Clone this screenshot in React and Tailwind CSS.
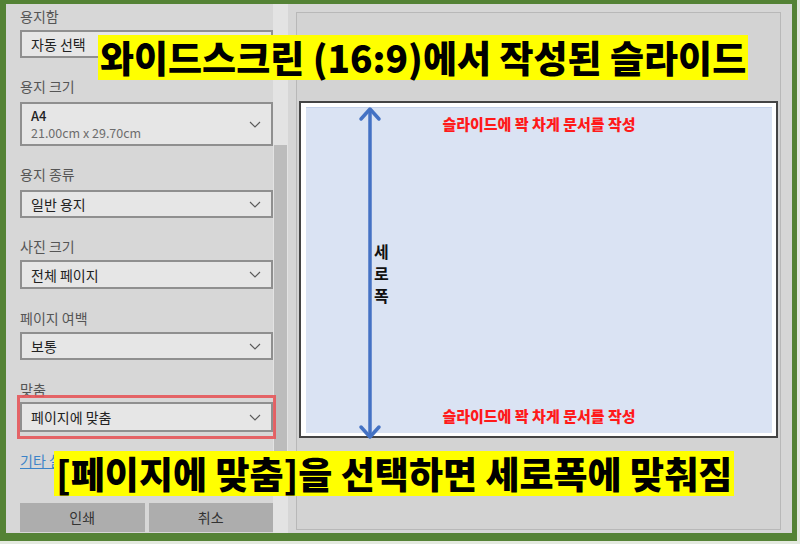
import React from "react";

const FONT = { fontFamily: '"Noto Sans CJK KR", "Noto Sans", sans-serif' };

function Chevron() {
  return (
    <svg width="12" height="7" viewBox="0 0 12 7" className="shrink-0">
      <path d="M1 1 L6 6 L11 1" fill="none" stroke="#5a5a5a" strokeWidth="1.1" />
    </svg>
  );
}

function Label({ children, className = "" }) {
  return (
    <div className={"h-[18px] text-[14px] leading-[18px] text-[#555555] " + className}>
      {children}
    </div>
  );
}

function Dropdown({ children, className = "", chevron = true }) {
  return (
    <div
      className={
        "flex items-center justify-between border-2 border-[#8f8f8f] bg-[#e6e6e6] pl-[9px] pr-[10px] " +
        className
      }
    >
      <div className="text-[14px] leading-[18px] text-[#222222]">{children}</div>
      {chevron && <Chevron />}
    </div>
  );
}

export default function App() {
  return (
    <div className="relative h-[544px] w-[800px] overflow-hidden bg-[#e4e9e0]" style={FONT}>
      <div className="flex h-[541px] w-[797px] border-b-[8px] border-l-[6px] border-r-[5px] border-t-4 border-[#548235]">
        {/* Left settings panel */}
        <div className="flex h-full w-[282px] shrink-0 bg-[#d7d7d7]">
          <div className="flex w-[267px] flex-col pl-[14px]">
            <Label className="mt-[3px]">용지함</Label>
            <Dropdown className="mt-[5px] h-[28px]" chevron={false}>자동 선택</Dropdown>

            <Label className="mt-[19px]">용지 크기</Label>
            <div className="mt-[7px] flex h-[44px] items-center justify-between border-2 border-[#8f8f8f] bg-[#e6e6e6] pl-[9px] pr-[10px]">
              <div className="flex flex-col">
                <span className="text-[13px] font-medium leading-[16px] text-[#222222]">A4</span>
                <span className="text-[12.5px] leading-[17px] text-[#6d6d6d]">21.00cm x 29.70cm</span>
              </div>
              <Chevron />
            </div>

            <Label className="mt-[19px]">용지 종류</Label>
            <Dropdown className="mt-[7px] h-[28px]">일반 용지</Dropdown>

            <Label className="mt-[19px]">사진 크기</Label>
            <Dropdown className="mt-[5px] h-[29px]">전체 페이지</Dropdown>

            <Label className="mt-[20px]">페이지 여백</Label>
            <Dropdown className="mt-[5px] h-[28px]">보통</Dropdown>

            <Label className="mt-[20px]">맞춤</Label>
            <div className="relative mt-[4px]">
              <Dropdown className="h-[30px]">페이지에 맞춤</Dropdown>
              <div className="pointer-events-none absolute -bottom-[7px] -left-[3px] -right-[3px] -top-[7px] border-[3px] border-[#e5575a]/90" />
            </div>

            <div className="mt-[18px] h-[20px] text-[14px] leading-[20px] text-[#3b83c8] underline underline-offset-2">
              기타 설정
            </div>

            <div className="mt-[33px] flex h-[29px] gap-[4px]">
              <div className="flex flex-1 items-center justify-center bg-[#adadad] text-[14px] text-[#333333]">인쇄</div>
              <div className="flex flex-1 items-center justify-center bg-[#adadad] text-[14px] text-[#333333]">취소</div>
            </div>
          </div>
          {/* scrollbar */}
          <div className="flex w-[15px] flex-col bg-[#e3e3e3]">
            <div className="h-[141px]" />
            <div className="mx-[1px] h-[325px] bg-[#bcbcbc]" />
          </div>
        </div>

        {/* Right preview area */}
        <div className="flex flex-1 bg-[#d6d6d6] pb-[3px] pl-[8px] pr-[11px] pt-[8px]">
          <div className="flex flex-1 flex-col border border-[#b8b8b8] bg-[#d3d3d3] px-[2px] pt-[88px]">
            <div className="relative h-[337px] w-[479px] border-2 border-[#444444] bg-white pb-[3px] pl-[5px] pr-[4px] pt-[4px]">
              <div className="flex h-full flex-col items-center justify-between border-t border-[#c3d1ea] bg-[#dae3f3] pb-[8px] pt-[6px]">
                <div className="text-[15px] font-black leading-[19px] text-[#ff1a1a]">슬라이드에 꽉 차게 문서를 작성</div>
                <div className="text-[15px] font-black leading-[19px] text-[#ff1a1a]">슬라이드에 꽉 차게 문서를 작성</div>
              </div>
              {/* arrow annotation */}
              <svg
                className="absolute left-[58px] top-[3px] overflow-visible"
                width="22"
                height="334"
                viewBox="0 0 22 334"
              >
                <line x1="11" y1="4" x2="11" y2="330" stroke="#4472c4" strokeWidth="3.5" />
                <path d="M2 13 L11 3 L20 13" fill="none" stroke="#4472c4" strokeWidth="3.5" strokeLinecap="round" strokeLinejoin="round" />
                <path d="M2 321 L11 331 L20 321" fill="none" stroke="#4472c4" strokeWidth="3.5" strokeLinecap="round" strokeLinejoin="round" />
              </svg>
              <div className="absolute left-[73px] top-[137px] flex flex-col text-[16px] font-bold leading-[22px] text-[#111111]">
                <span>세</span>
                <span>로</span>
                <span>폭</span>
              </div>
            </div>
          </div>
        </div>
      </div>

      {/* Yellow callout banners */}
      <div className="absolute left-[98px] top-[35px] flex h-[45px] items-center bg-[#ffff00] px-[2px] text-[37px] font-black leading-[45px] text-black whitespace-nowrap">
        와이드스크린 (16:9)에서 작성된 슬라이드
      </div>
      <div className="absolute left-[54px] top-[451px] flex h-[45px] items-center bg-[#ffff00] px-[2px] text-[37px] font-black leading-[45px] text-black whitespace-nowrap">
        [페이지에 맞춤]을 선택하면 세로폭에 맞춰짐
      </div>
    </div>
  );
}
